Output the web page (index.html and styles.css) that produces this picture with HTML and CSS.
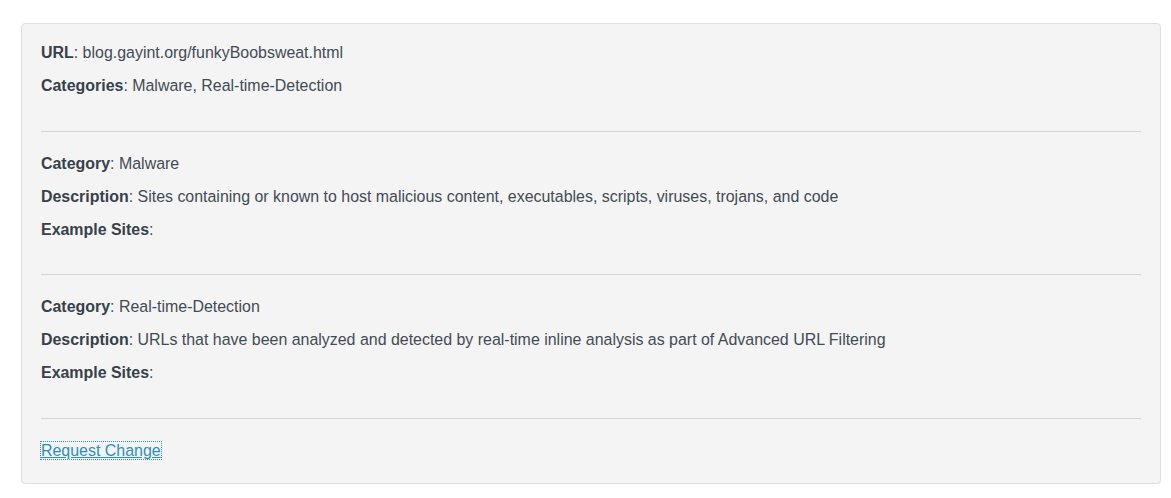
FILE: index.html
```html
<!DOCTYPE html>
<html>
<head>
<meta charset="utf-8">
<link rel="stylesheet" href="styles.css">
</head>
<body>
<div class="panel">
  <div class="section">
    <p><b>URL</b>: blog.gayint.org/funkyBoobsweat.html</p>
    <p><b>Categories</b>: Malware, Real-time-Detection</p>
  </div>
  <hr class="rule">
  <div class="section">
    <p><b>Category</b>: Malware</p>
    <p><b>Description</b>: Sites containing or known to host malicious content, executables, scripts, viruses, trojans, and code</p>
    <p><b>Example Sites</b>:</p>
  </div>
  <hr class="rule">
  <div class="section">
    <p><b>Category</b>: Real-time-Detection</p>
    <p><b>Description</b>: URLs that have been analyzed and detected by real-time inline analysis as part of Advanced URL Filtering</p>
    <p><b>Example Sites</b>:</p>
  </div>
  <hr class="rule">
  <div class="section last">
    <p><a class="link" href="#">Request Change</a></p>
  </div>
</div>
</body>
</html>
```
FILE: styles.css
```css
html, body {
  margin: 0;
  padding: 0;
  background: #ffffff;
}
body {
  font-family: "Liberation Sans", Arial, sans-serif;
  font-size: 15.95px;
  color: #414b55;
}
.panel {
  margin: 23px 10px 0 21px;
  padding: 18px 19px 21px 19px;
  background: #f4f4f4;
  border: 1px solid #dfdfdf;
  border-radius: 4px;
  box-shadow: 0 1px 1px rgba(0,0,0,0.03);
}
.section p {
  margin: 0 0 10.5px 0;
  line-height: 22.5px;
}
.section b {
  font-weight: bold;
  color: #36414b;
}
.section.last p {
  margin: 0;
}
.rule {
  border: 0;
  border-top: 1px solid #cfd5d5;
  height: 0;
  margin: 33px 0 21px 0;
}
.link {
  color: #2b8fbf;
  text-decoration: underline;
  outline: 1px dotted #2b8fbf;
}
```
